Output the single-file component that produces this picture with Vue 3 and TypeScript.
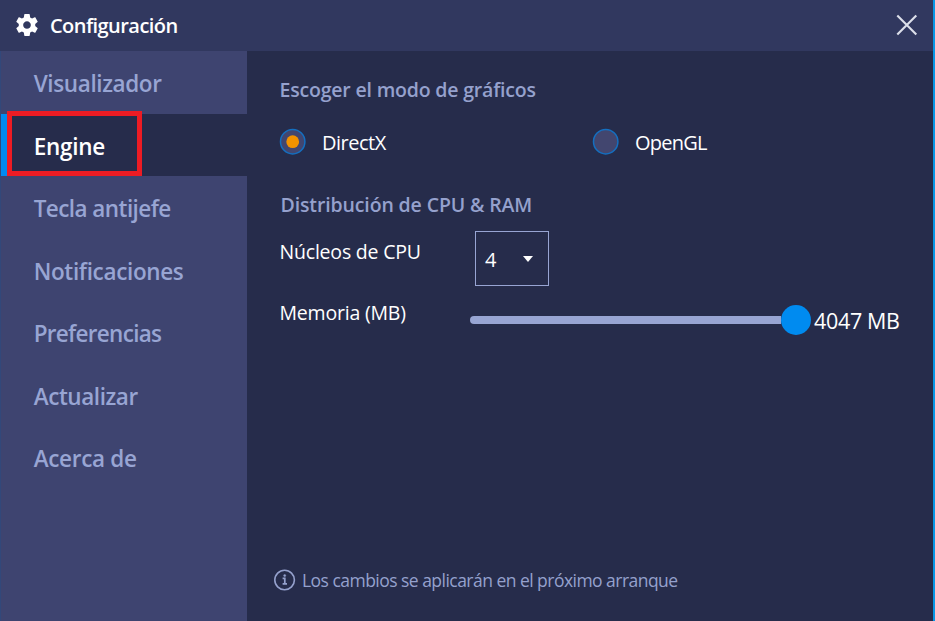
<script setup lang="ts">
import { ref } from 'vue'

interface Section { label: string; spacing: string }

const sections: Section[] = [
  { label: 'Visualizador', spacing: 's1' },
  { label: 'Engine', spacing: 's2' },
  { label: 'Tecla antijefe', spacing: 's3' },
  { label: 'Notificaciones', spacing: 's4' },
  { label: 'Preferencias', spacing: 's5' },
  { label: 'Actualizar', spacing: 's6' },
  { label: 'Acerca de', spacing: 's7' },
]
const active = ref('Engine')
const mode = ref('DirectX')
const modes: string[] = ['DirectX', 'OpenGL']
const cores = ref(4)
const memory = ref(4047)
</script>

<template>
  <div class="window">
    <header class="titlebar">
      <svg class="gear" width="22" height="22" viewBox="2 2 20 20">
        <path fill="#fff" d="M19.43 12.98c.04-.32.07-.64.07-.98s-.03-.66-.07-.98l2.11-1.65c.19-.15.24-.42.12-.64l-2-3.46c-.12-.22-.39-.3-.61-.22l-2.49 1c-.52-.4-1.08-.73-1.69-.98l-.38-2.65C14.46 2.18 14.25 2 14 2h-4c-.25 0-.46.18-.49.42l-.38 2.65c-.61.25-1.17.59-1.69.98l-2.49-1c-.23-.09-.49 0-.61.22l-2 3.46c-.13.22-.07.49.12.64l2.11 1.65c-.04.32-.07.65-.07.98s.03.66.07.98l-2.11 1.65c-.19.15-.24.42-.12.64l2 3.46c.12.22.39.3.61.22l2.49-1c.52.4 1.08.73 1.69.98l.38 2.65c.03.24.24.42.49.42h4c.25 0 .46-.18.49-.42l.38-2.65c.61-.25 1.17-.59 1.69-.98l2.49 1c.23.09.49 0 .61-.22l2-3.46c.12-.22.07-.49-.12-.64l-2.11-1.65zM12 15.5c-1.93 0-3.5-1.57-3.5-3.5s1.57-3.5 3.5-3.5 3.5 1.57 3.5 3.5-1.57 3.5-3.5 3.5z" />
      </svg>
      <h1>Configuración</h1>
      <button class="close" aria-label="Cerrar">
        <svg width="22" height="22" viewBox="0 0 22 22"><path d="M1.3 1.5 20.3 20.5M20.3 1.5 1.3 20.5" stroke="#dcdfea" stroke-width="2.1" fill="none" /></svg>
      </button>
    </header>
    <div class="body">
      <nav class="sidebar">
        <a v-for="s in sections" :key="s.label" class="item" :class="{ active: s.label === active }" @click="active = s.label">
          <span :class="s.spacing">{{ s.label }}</span>
          <i v-if="s.label === 'Engine'" class="marker"></i>
        </a>
      </nav>
      <main class="panel">
        <h2>Escoger el modo de gráficos</h2>
        <div class="modes">
          <label v-for="m in modes" :key="m" class="mode" @click="mode = m">
            <svg class="radio" width="26" height="26" viewBox="0 0 26 26">
              <circle cx="12.7" cy="12.7" r="12.2" fill="#42466f" stroke="#146fc0" stroke-width="1.5" />
              <circle v-if="m === mode" cx="12.7" cy="12.7" r="6.4" fill="#f39300" />
            </svg>
            <span class="mode-name" :class="m.toLowerCase()">{{ m }}</span>
          </label>
        </div>
        <h2 class="second">Distribución de CPU &amp; RAM</h2>
        <div class="row cpu">
          <span class="name">Núcleos de CPU</span>
          <div class="select"><span>{{ cores }}</span><svg width="10" height="6" viewBox="0 0 10 6"><path d="M0 0H10L5 6Z" fill="#fff" /></svg></div>
        </div>
        <div class="row memory">
          <span class="name">Memoria (MB)</span>
          <div class="slider"><div class="track"></div><div class="thumb"></div></div>
          <span class="value">{{ memory }} MB</span>
        </div>
        <footer class="note">
          <svg width="22" height="22" viewBox="0 0 22 22" fill="none" stroke="#95a1cd"><circle cx="10.6" cy="11" r="9.8" stroke-width="1.6" /><path d="M8.6 9.4h2.2v5.2M8.6 14.9h4.4" stroke-width="1.7" /><circle cx="10.7" cy="6.6" r="1.1" fill="#95a1cd" stroke-width=".4" /></svg>
          <span>Los cambios se aplicarán en el próximo arranque</span>
        </footer>
      </main>
    </div>
  </div>
</template>

<style>
body { margin: 0; overflow: hidden; }
</style>
<style scoped>
* { box-sizing: border-box; }
.window { width: 935px; height: 621px; display: flex; flex-direction: column; background: #262c4b; border-right: 2px solid #0897e5; font-family: "Open Sans", "Noto Sans", sans-serif; color: #fff; white-space: nowrap; }
.titlebar { height: 51px; display: flex; align-items: center; padding: 0 15px 0 16px; background: #31385f; }
.gear { flex: none; margin-top: -1px; }
h1 { margin: 0 auto 0 12px; font-size: 20px; line-height: 28px; font-weight: 600; letter-spacing: -.56px; }
.close { display: flex; margin-top: -1px; padding: 0; border: 0; background: none; }
.body { flex: 1; display: flex; }
.sidebar { flex: none; width: 247px; background: #3e4470; border-left: 1px solid #32487a; }
.item { position: relative; display: flex; align-items: center; height: 62.5px; padding: 3px 0 0 32.7px; color: #98a5d3; font-size: 22.5px; font-weight: 600; }
.item.active { background: #262c4b; color: #fff; box-shadow: inset 7px 0 #008bf0; }
.s1 { letter-spacing: -.38px; }
.s2 { letter-spacing: -.25px; }
.s3 { letter-spacing: -.56px; }
.s4 { letter-spacing: -.34px; }
.s5 { letter-spacing: -.7px; }
.s6 { letter-spacing: -.43px; }
.s7 { letter-spacing: -.32px; }
.marker { position: absolute; left: 6px; top: -2.5px; width: 135px; height: 65px; border: 5px solid #ed1c24; }
.panel { flex: 1; min-width: 0; display: flex; flex-direction: column; padding: 25px 0 0 33px; }
h2 { margin: 0 0 0 -.5px; height: 28px; line-height: 28px; font-size: 19.5px; font-weight: 600; letter-spacing: -.19px; color: #95a1cd; }
.modes { display: grid; grid-template-columns: 313px 1fr; margin-top: 24px; height: 28px; }
.mode { display: flex; align-items: center; gap: 16px; font-size: 20px; }
.mode-name { padding-top: 1px; }
.directx { letter-spacing: -.5px; }
.opengl { letter-spacing: -.75px; }
.radio { flex: none; overflow: visible; }
.second { margin-top: 35px; padding-left: 1px; letter-spacing: -.13px; }
.row { display: flex; font-size: 19.5px; }
.name { width: 195px; letter-spacing: -.2px; text-indent: -.5px; }
.cpu { height: 55px; margin-top: 12px; }
.cpu .name { line-height: 42px; }
.select { display: flex; align-items: center; justify-content: space-between; width: 74px; height: 55px; padding: 2px 15px 0 9px; border: 1px solid #98a5d3; font-size: 20px; }
.select svg { margin-top: -1px; }
.memory { align-items: center; height: 32px; margin-top: 18px; }
.memory .name { width: 190px; padding-bottom: 16px; }
.slider { display: flex; align-items: center; width: 340.5px; }
.track { flex: 1; height: 8px; border-radius: 4px 0 0 4px; background: #98a5d3; }
.thumb { width: 30px; height: 30px; border-radius: 50%; background: #008bf0; }
.value { margin-left: 3.5px; padding-top: 1px; font-size: 21.5px; letter-spacing: -.33px; }
.note { display: flex; align-items: center; gap: 6px; height: 28px; margin: auto 0 27px -6px; color: #95a1cd; font-size: 17.5px; letter-spacing: -.53px; }
</style>
